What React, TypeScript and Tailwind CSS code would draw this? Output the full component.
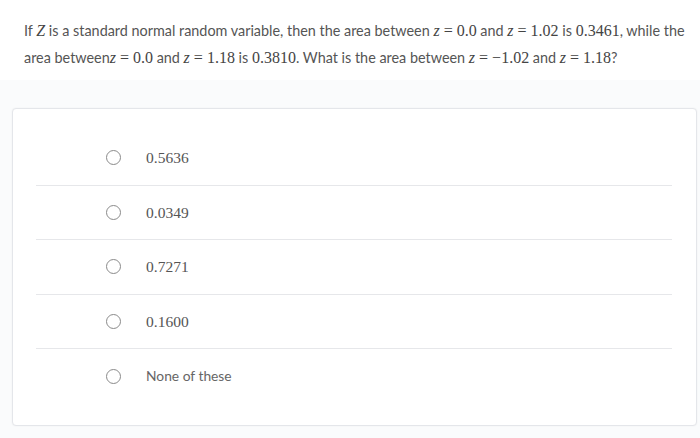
import React from 'react';

const options: { label: string; math: boolean }[] = [
  { label: '0.5636', math: true },
  { label: '0.0349', math: true },
  { label: '0.7271', math: true },
  { label: '0.1600', math: true },
  { label: 'None of these', math: false },
];

const M: React.FC<{ children: React.ReactNode; italic?: boolean }> = ({ children, italic }) => (
  <span className={`font-['Liberation_Serif',serif] text-[16px] text-[#444] ${italic ? 'italic' : ''}`}>{children}</span>
);

const Eq: React.FC<{ v: string; n: string }> = ({ v, n }) => (
  <span className="whitespace-nowrap">
    <M italic>{v}</M>
    <span className="inline-block mx-[4px] font-['Liberation_Serif',serif] text-[16px] text-[#444]">=</span>
    <M>{n}</M>
  </span>
);

const App: React.FC = () => {
  return (
    <div className="w-[700px] h-[438px] bg-[#fafbfc] font-['Lato',sans-serif] text-[#555] overflow-hidden">
      <div className="bg-white pl-6 pr-3 pt-[17px] pb-[9px] text-[14.4px] leading-[27px]">
        <p>
          <span className="whitespace-nowrap">
            If <M italic>Z</M> is a standard normal random variable, then the area between <Eq v="z" n="0.0" /> and{' '}
            <Eq v="z" n="1.02" /> is <M>0.3461</M>, while the
          </span>
          <br />
          area between<Eq v="z" n="0.0" /> and <Eq v="z" n="1.18" /> is <M>0.3810</M>. What is the area between{' '}
          <Eq v="z" n="−1.02" /> and <Eq v="z" n="1.18" />?
        </p>
      </div>
      <div className="ml-3 mt-[28px] w-[685px] bg-white border border-[#e4e6ea] rounded shadow-[0_0_2px_rgba(0,0,0,0.05)] pl-[23px] pr-[24px] pt-[22px] pb-[21px]">
        {options.map((o, i) => (
          <div
            key={o.label}
            className={`flex items-center h-[54.5px] pl-[70px] ${i < options.length - 1 ? 'border-b border-[#e6e7ea]' : ''}`}
          >
            <span className="w-[15px] h-[15px] rounded-full border-[1.5px] border-[#8a8a8a] shrink-0" />
            <span className={`ml-[25px] ${o.math ? "font-['Liberation_Serif',serif] text-[15.5px] text-[#555]" : 'text-[13.8px] text-[#666]'}`}>
              {o.label}
            </span>
          </div>
        ))}
      </div>
    </div>
  );
};

export default App;
